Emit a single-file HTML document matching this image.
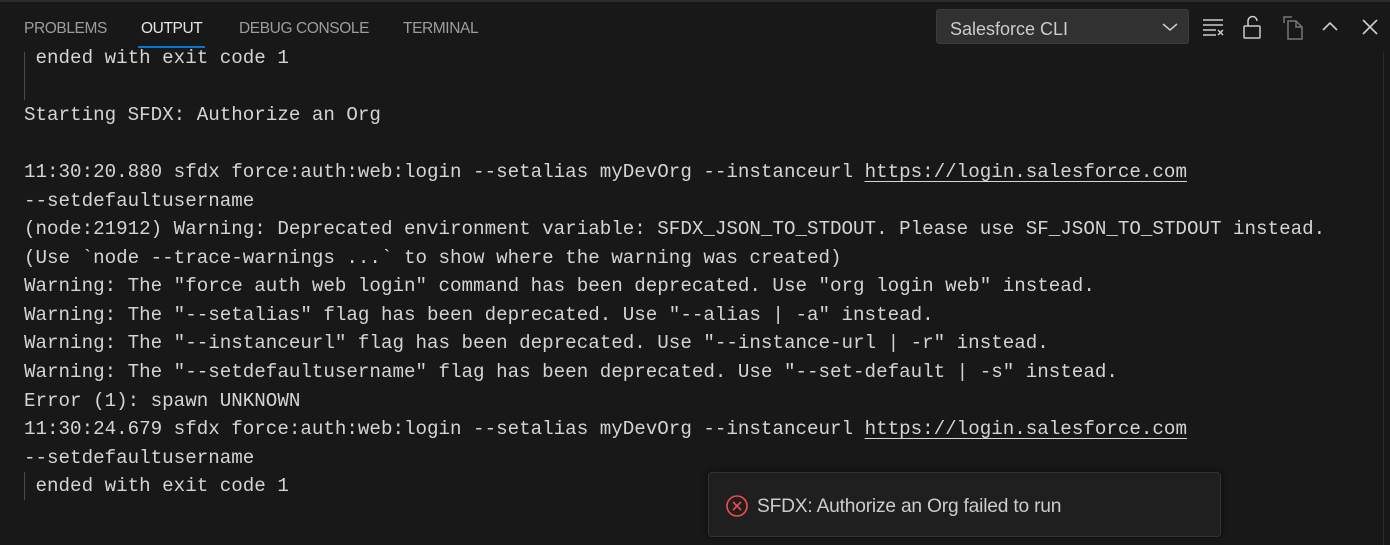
<!DOCTYPE html>
<html><head><style>
body{margin:0;width:1390px;height:545px;background:#181818;overflow:hidden;position:relative;font-family:"Liberation Sans",sans-serif}
.tab{position:absolute;top:20px;font-size:15.5px;color:#9d9d9d;letter-spacing:-0.4px}
.out{position:absolute;left:24px;top:44px;font-family:"Liberation Mono",monospace;font-size:19.2px;line-height:28.55px;color:#d4d4d4;white-space:pre}
.out u{text-decoration:underline;text-underline-offset:4px}
.bar{position:absolute;left:24px;width:1px;background:#4a4a4a}
</style></head><body>
<div style="position:absolute;left:0;top:0;width:1390px;height:2px;background:#2b2b2b"></div>
<div class="tab" style="left:24px">PROBLEMS</div>
<div class="tab" style="left:141px;color:#e7e7e7">OUTPUT</div>
<div style="position:absolute;left:138px;top:46px;width:67px;height:2px;background:#0078d4"></div>
<div class="tab" style="left:239px">DEBUG CONSOLE</div>
<div class="tab" style="left:403px">TERMINAL</div>
<div style="position:absolute;left:936px;top:9px;width:253px;height:35px;background:#313131;border:1px solid #3c3c3c;border-radius:3px;box-sizing:border-box"></div>
<div style="position:absolute;left:950px;top:19px;font-size:18px;color:#cccccc">Salesforce CLI</div>
<svg style="position:absolute;left:1160px;top:19px" width="20" height="16"><path d="M3 5l7 6 7-6" stroke="#ccc" stroke-width="1.5" fill="none"/></svg>
<svg style="position:absolute;left:1200px;top:15px" width="28" height="26" stroke="#ccc" stroke-width="1.5" fill="none"><path d="M3 5h20M3 10h20M3 15h13M3 20h13M18 15l5 5M23 15l-5 5"/></svg>
<svg style="position:absolute;left:1240px;top:13px" width="26" height="28" stroke="#ccc" stroke-width="1.5" fill="none"><rect x="4" y="13" width="16" height="12" rx="1"/><path d="M8 13V8a4.5 4.5 0 0 1 9 0"/></svg>
<svg style="position:absolute;left:1278px;top:13px" width="28" height="28" stroke="#777" stroke-width="1.5" fill="none"><path d="M10 8h8l6 6v12H10zM18 8v6h6M14 4H6v6"/></svg>
<svg style="position:absolute;left:1320px;top:17px" width="20" height="20" stroke="#ccc" stroke-width="1.6" fill="none"><path d="M3 13l7-7 7 7"/></svg>
<svg style="position:absolute;left:1360px;top:17px" width="20" height="20" stroke="#ccc" stroke-width="1.6" fill="none"><path d="M3 3l14 14M17 3L3 17"/></svg>
<div class="bar" style="top:52px;height:48px"></div>
<div class="bar" style="top:472px;height:28px"></div>
<div class="out"> ended with exit code 1

Starting SFDX: Authorize an Org

11:30:20.880 sfdx force:auth:web:login --setalias myDevOrg --instanceurl <u>https://login.salesforce.com</u>
--setdefaultusername
(node:21912) Warning: Deprecated environment variable: SFDX_JSON_TO_STDOUT. Please use SF_JSON_TO_STDOUT instead.
(Use `node --trace-warnings ...` to show where the warning was created)
Warning: The "force auth web login" command has been deprecated. Use "org login web" instead.
Warning: The "--setalias" flag has been deprecated. Use "--alias | -a" instead.
Warning: The "--instanceurl" flag has been deprecated. Use "--instance-url | -r" instead.
Warning: The "--setdefaultusername" flag has been deprecated. Use "--set-default | -s" instead.
Error (1): spawn UNKNOWN
11:30:24.679 sfdx force:auth:web:login --setalias myDevOrg --instanceurl <u>https://login.salesforce.com</u>
--setdefaultusername
 ended with exit code 1</div>
<div style="position:absolute;left:1383px;top:52px;width:1px;height:493px;background:#2b2b2b"></div>
<div style="position:absolute;left:708px;top:472px;width:513px;height:65px;background:#1f1f1f;border:1px solid #333;border-radius:4px;box-sizing:border-box;box-shadow:0 0 8px rgba(0,0,0,.5)"></div>
<svg style="position:absolute;left:725px;top:494px" width="24" height="24" stroke="#f14c4c" stroke-width="1.6" fill="none"><circle cx="12" cy="12" r="10"/><path d="M8 8l8 8M16 8l-8 8"/></svg>
<div style="position:absolute;left:757px;top:496px;font-size:19.2px;color:#cccccc;letter-spacing:-0.2px">SFDX: Authorize an Org failed to run</div>
</body></html>
